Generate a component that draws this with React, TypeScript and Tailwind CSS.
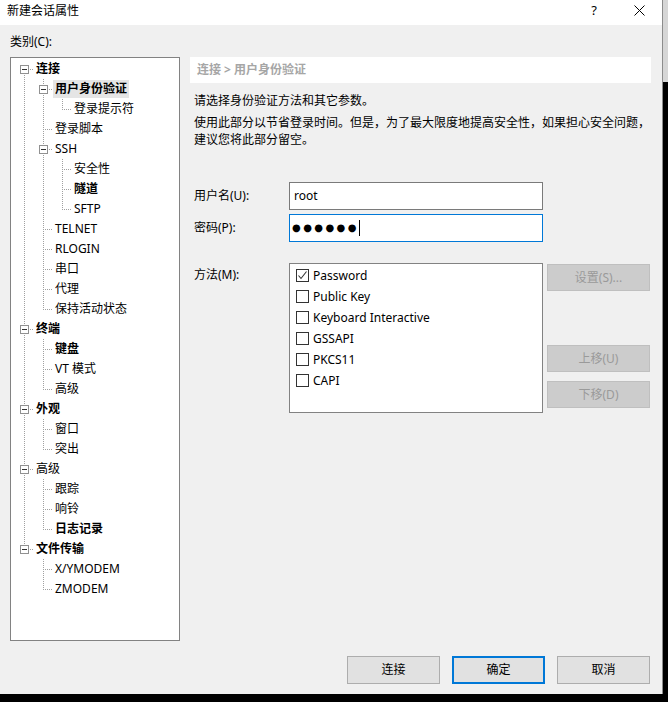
import React from "react";

type TreeNode = {
  label: string;
  bold?: boolean;
  selected?: boolean;
  children?: TreeNode[];
};

type FlatRow = {
  node: TreeNode;
  conts: boolean[];
  hasNext: boolean;
  first: boolean;
};

const tree: TreeNode[] = [
  {
    label: "连接",
    bold: true,
    children: [
      { label: "用户身份验证", bold: true, selected: true, children: [{ label: "登录提示符" }] },
      { label: "登录脚本" },
      {
        label: "SSH",
        children: [{ label: "安全性" }, { label: "隧道", bold: true }, { label: "SFTP" }],
      },
      { label: "TELNET" },
      { label: "RLOGIN" },
      { label: "串口" },
      { label: "代理" },
      { label: "保持活动状态" },
    ],
  },
  {
    label: "终端",
    bold: true,
    children: [{ label: "键盘", bold: true }, { label: "VT 模式" }, { label: "高级" }],
  },
  { label: "外观", bold: true, children: [{ label: "窗口" }, { label: "突出" }] },
  {
    label: "高级",
    children: [{ label: "跟踪" }, { label: "响铃" }, { label: "日志记录", bold: true }],
  },
  { label: "文件传输", bold: true, children: [{ label: "X/YMODEM" }, { label: "ZMODEM" }] },
];

function flatten(nodes: TreeNode[], conts: boolean[], root: boolean, out: FlatRow[]) {
  nodes.forEach((node, i) => {
    const hasNext = i < nodes.length - 1;
    out.push({ node, conts, hasNext, first: root && i === 0 });
    if (node.children) flatten(node.children, [...conts, hasNext], false, out);
  });
  return out;
}

const rows = flatten(tree, [], true, []);

function Guide({ on }: { on: boolean }) {
  return (
    <svg width="19" height="20" className="shrink-0" shapeRendering="crispEdges">
      {on && <line x1="9.5" y1="0" x2="9.5" y2="20" stroke="#a0a0a0" strokeDasharray="1 1" />}
    </svg>
  );
}

function Connector({ row }: { row: FlatRow }) {
  return (
    <svg width="19" height="20" className="shrink-0" shapeRendering="crispEdges">
      {!row.first && <line x1="9.5" y1="0" x2="9.5" y2="10" stroke="#a0a0a0" strokeDasharray="1 1" />}
      {row.hasNext && <line x1="9.5" y1="10" x2="9.5" y2="20" stroke="#a0a0a0" strokeDasharray="1 1" />}
      <line x1="9" y1="10.5" x2="19" y2="10.5" stroke="#a0a0a0" strokeDasharray="1 1" />
      {row.node.children && (
        <>
          <rect x="5.5" y="6.5" width="8" height="8" fill="#fff" stroke="#919191" />
          <line x1="7" y1="10.5" x2="12" y2="10.5" stroke="#333" />
        </>
      )}
    </svg>
  );
}

function TreeRow({ row }: { row: FlatRow }) {
  return (
    <div className="flex h-5 items-center">
      {row.conts.map((c, i) => (
        <Guide key={i} on={c} />
      ))}
      <Connector row={row} />
      <span
        className={`px-[2px] text-[12px] leading-[18px] whitespace-nowrap text-black ${
          row.node.bold ? "font-bold" : ""
        } ${row.node.selected ? "bg-[#e5e5e5]" : ""}`}
      >
        {row.node.label}
      </span>
    </div>
  );
}

function Checkbox({ checked }: { checked?: boolean }) {
  return (
    <div className="w-[13px] h-[13px] border border-[#333] bg-white flex items-center justify-center shrink-0">
      {checked && (
        <svg width="11" height="11" viewBox="0 0 11 11">
          <polyline points="1.5,5.5 4,8.5 9.5,1.5" fill="none" stroke="#333" strokeWidth="1.1" />
        </svg>
      )}
    </div>
  );
}

function DisabledButton({ label }: { label: string }) {
  return (
    <div className="w-[103px] h-[27px] bg-[#cccccc] border border-[#bfbfbf] flex items-center justify-center text-[12px] text-[#9a9a9a]">
      {label}
    </div>
  );
}

function DialogButton({ label, primary }: { label: string; primary?: boolean }) {
  return (
    <div
      className={`w-[93px] h-[28px] bg-[#e1e1e1] flex items-center justify-center text-[12px] text-black ${
        primary ? "border-2 border-[#0078d7]" : "border border-[#adadad]"
      }`}
    >
      {label}
    </div>
  );
}

const methods = ["Password", "Public Key", "Keyboard Interactive", "GSSAPI", "PKCS11", "CAPI"];

export default function App() {
  return (
    <div className="w-[668px] h-[702px] bg-black flex flex-col font-['Noto_Sans','Noto_Sans_CJK_SC',sans-serif]">
      <div className="flex h-[694px]">
        <div className="w-[663px] h-full flex flex-col bg-[#f0f0f0] border-r border-[#8c8c8c]">
          {/* title bar */}
          <div className="h-[25px] bg-white flex items-center shrink-0 pb-[4px]">
            <span className="pl-[7px] text-[12px] text-black">新建会话属性</span>
            <span className="ml-auto mr-[37px] text-[13px] text-black">?</span>
            <svg width="11" height="11" className="mr-[17px]">
              <path d="M0.5 0.5 L10.5 10.5 M10.5 0.5 L0.5 10.5" stroke="#000" strokeWidth="1" />
            </svg>
          </div>

          {/* body */}
          <div className="flex flex-col pl-[10px]">
            <div className="flex gap-[10px] items-start">
              <div className="w-[170px] flex flex-col">
                <div className="pt-[8px] h-[26px] leading-[18px] text-[12px] text-black">类别(C):</div>
                <div className="mt-[6px] h-[584px] bg-white border border-[#828282] pl-[4px] pt-[1px]">
                  {rows.map((r, i) => (
                    <TreeRow key={i} row={r} />
                  ))}
                </div>
              </div>

              <div className="w-[461px] flex flex-col mt-[32px]">
                <div className="h-[26px] bg-white flex items-center pl-[7px] text-[12px] font-bold text-[#a6a6a6]">
                  连接 &gt; 用户身份验证
                </div>
                <div className="pl-[4px] mt-[9px] text-[12px] text-black">
                  <p className="leading-[18px]">请选择身份验证方法和其它参数。</p>
                  <p className="mt-[4px] leading-[17px] whitespace-nowrap">
                    使用此部分以节省登录时间。但是，为了最大限度地提高安全性，如果担心安全问题，
                    <br />
                    建议您将此部分留空。
                  </p>
                </div>

                <div className="mt-[34px] flex items-center">
                  <span className="w-[99px] pl-[4px] text-[12px] text-black">用户名(U):</span>
                  <div className="w-[254px] h-[28px] bg-white border border-[#7a7a7a] flex items-center pl-[4px] text-[12px] text-black">
                    root
                  </div>
                </div>
                <div className="mt-[4px] flex items-center">
                  <span className="w-[99px] pl-[4px] text-[12px] text-black">密码(P):</span>
                  <div className="w-[254px] h-[28px] bg-white border border-[#0078d7] flex items-center pl-[2px] text-black">
                    <span className="font-['DejaVu_Sans',sans-serif] text-[10px] tracking-[2.4px] leading-none">
                      ●●●●●●
                    </span>
                    <span className="w-px h-[16px] bg-black" />
                  </div>
                </div>

                <div className="mt-[21px] flex items-start">
                  <span className="w-[99px] pl-[4px] pt-[3px] text-[12px] leading-[18px] text-black">方法(M):</span>
                  <div className="w-[254px] h-[150px] bg-white border border-[#828282] pt-[1px] pl-[6px]">
                    {methods.map((m, i) => (
                      <div key={m} className="h-[21px] flex items-center gap-[4px]">
                        <Checkbox checked={i === 0} />
                        <span className="text-[12px] text-black">{m}</span>
                      </div>
                    ))}
                  </div>
                  <div className="ml-[4px] pt-[1px] flex flex-col">
                    <DisabledButton label="设置(S)..." />
                    <div className="mt-[54px]">
                      <DisabledButton label="上移(U)" />
                    </div>
                    <div className="mt-[9px]">
                      <DisabledButton label="下移(D)" />
                    </div>
                  </div>
                </div>
              </div>
            </div>

            <div className="mt-[15px] flex justify-end gap-[12px] pr-[12px]">
              <DialogButton label="连接" />
              <DialogButton label="确定" primary />
              <DialogButton label="取消" />
            </div>
          </div>
        </div>
        <div className="flex-1 flex flex-col">
          <div className="h-[82px] bg-[#d6d6d6]" />
        </div>
      </div>
    </div>
  );
}
